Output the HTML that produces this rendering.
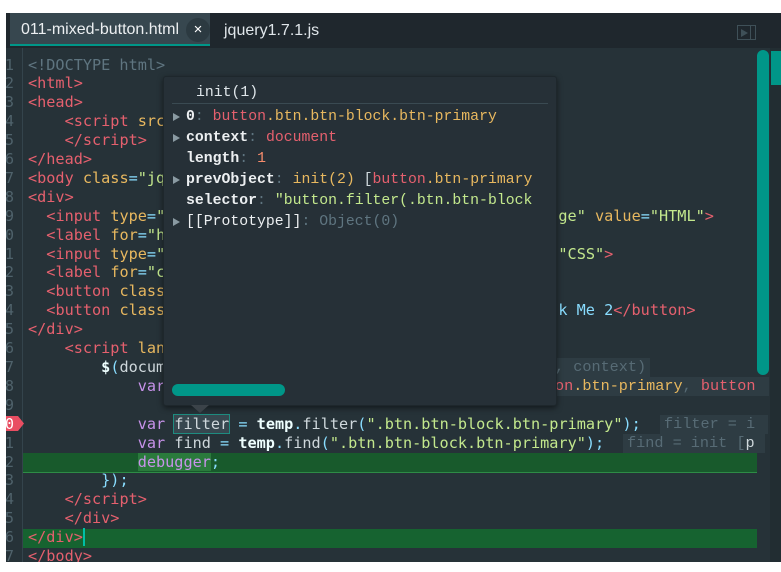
<!DOCTYPE html>
<html><head><style>
body{margin:0;width:781px;height:572px;background:#fff;overflow:hidden;position:relative;font-family:"Liberation Mono",monospace}
#win{position:absolute;left:6px;top:13px;width:775px;height:549px;background:#263238;overflow:hidden}
#tabs{position:absolute;left:0;top:0;width:775px;height:35px;background:#1f272d}
.tab1{position:absolute;left:4px;top:0;width:200px;height:33px;background:#37474f;border-bottom:2px solid #009688;color:#eceff1;font:16px "Liberation Sans",sans-serif;line-height:34px;padding-left:11px;box-sizing:border-box}
.x{position:absolute;left:176px;top:5px;width:24px;height:24px;border-radius:12px;background:#2c3a41;color:#fff;text-align:center;line-height:24px;font-size:15px}
.tab2{position:absolute;left:218px;top:0;color:#e0e6ea;font:16px "Liberation Sans",sans-serif;line-height:36px}
pre{margin:0;position:absolute;left:22px;top:42.5px;font-size:15.2px;line-height:18.9px;color:#cfd8dc;white-space:pre}
#gut{position:absolute;left:-12px;top:42.5px;font-size:15.2px;line-height:18.9px;color:#4f626b;text-align:right;width:20px;white-space:pre;margin:0}
.t{color:#e5606e}.a{color:#e8b85f}.s{color:#c3e88d}.p{color:#89ddff}.v{color:#c792ea}.g{color:#5f7580}.w{color:#eeffff;font-weight:bold}
.ann{position:absolute;background:#2e3c43;color:#576b75;font-size:15.2px;line-height:18.9px;white-space:pre;padding:0 4px}
#pop{position:absolute;left:157px;top:63px;width:392px;height:328px;background:#263037;border:1px solid #1e272c;border-radius:3px;box-shadow:0 2px 6px rgba(0,0,0,.5)}
#pop .r{position:absolute;left:22px;font-size:14.8px;white-space:pre;color:#cfd8dc}
.k{color:#eceff1;font-weight:bold}
.tri{position:absolute;left:9px;width:0;height:0;border-left:7px solid #8a9aa2;border-top:4.5px solid transparent;border-bottom:4.5px solid transparent}
</style></head><body>
<div id="win">
<div id="tabs"><div class="tab1">011-mixed-button.html<div class="x">×</div></div><div class="tab2">jquery1.7.1.js</div>
<div style="position:absolute;left:731px;top:12px;width:19px;height:15px;border:1px solid #3f5058;box-sizing:border-box"><div style="position:absolute;left:3px;top:3px;width:0;height:0;border-left:7px solid #3f5058;border-top:4px solid transparent;border-bottom:4px solid transparent"></div><div style="position:absolute;left:12px;top:0;width:1px;height:13px;background:#3f5058"></div></div>
</div>
<div style="position:absolute;left:16px;top:440px;width:735px;height:19px;background:#185a2c;border-bottom:1px solid #2e8b46"></div>
<div style="position:absolute;left:16px;top:516px;width:735px;height:19px;background:#166330"></div>
<div style="position:absolute;left:16px;top:35px;width:1px;height:520px;background:#34444c"></div>
<div style="position:absolute;left:-6px;top:403px;width:24px;height:15px;background:#e94e62;clip-path:polygon(0 0,75% 0,100% 50%,75% 100%,0 100%)"></div>
<pre id="gut">1
2
3
4
5
6
7
8
9
10
11
12
13
14
15
16
17
18
19
<span style="color:#fff">20</span>
21
22
23
24
25
26
27</pre>
<pre><span class="g">&lt;!DOCTYPE html&gt;</span>
<span class="t">&lt;html&gt;</span>
<span class="t">&lt;head&gt;</span>
    <span class="t">&lt;script</span> <span class="a">src</span>
    <span class="t">&lt;/script&gt;</span>
<span class="t">&lt;/head&gt;</span>
<span class="t">&lt;body</span> <span class="a">class</span><span class="p">=</span><span class="s">"jq</span>
<span class="t">&lt;div&gt;</span>
  <span class="t">&lt;input</span> <span class="a">type</span><span class="p">=</span><span class="s">"</span>                                           <span class="s">ge"</span> <span class="a">value</span><span class="p">=</span><span class="s">"HTML"</span><span class="t">&gt;</span>
  <span class="t">&lt;label</span> <span class="a">for</span><span class="p">=</span><span class="s">"h</span>
  <span class="t">&lt;input</span> <span class="a">type</span><span class="p">=</span><span class="s">"</span>                                           <span class="s">"CSS"</span><span class="t">&gt;</span>
  <span class="t">&lt;label</span> <span class="a">for</span><span class="p">=</span><span class="s">"c</span>
  <span class="t">&lt;button</span> <span class="a">class</span>
  <span class="t">&lt;button</span> <span class="a">class</span>                                           <span class="p">k Me 2</span><span class="t">&lt;/button&gt;</span>
<span class="t">&lt;/div&gt;</span>
    <span class="t">&lt;script</span> <span class="a">lan</span>
        <span class="w">$</span><span class="p">(</span>docum
            <span class="v">var</span>

            <span class="v">var</span> <span style="background:#37474f;outline:1px solid #1e8c80">filter</span> <span class="p">=</span> <span class="w">temp</span><span class="p">.</span>filter<span class="p">(</span><span class="s">".btn.btn-block.btn-primary"</span><span class="p">);</span>
            <span class="v">var</span> find <span class="p">=</span> <span class="w">temp</span><span class="p">.</span>find<span class="p">(</span><span class="s">".btn.btn-block.btn-primary"</span><span class="p">);</span>
            <span class="v" style="background:#2a7a3c">debugger</span><span class="p">;</span>
        <span class="p">});</span>
    <span class="t">&lt;/script&gt;</span>
    <span class="t">&lt;/div&gt;</span>
<span class="t">&lt;/div&gt;</span><span style="border-left:2px solid #00bfa5"></span>
<span class="t">&lt;/body&gt;</span></pre>
<div class="ann" style="left:545px;top:345px">, context)</div>
<div class="ann" style="left:545px;top:364px;width:210px;overflow:hidden"><span class="t">on</span><span class="a">.btn-primary</span>, <span class="t">button</span></div>
<div class="ann" style="left:654px;top:402px;width:100px;overflow:hidden">filter = i</div>
<div class="ann" style="left:617px;top:421px;width:134px;overflow:hidden">find = init [<span style="color:#cfd8dc">p</span></div>
<div id="pop">
<div class="r" style="left:32px;top:8px;color:#dfe6ea">init(1)</div>
<div style="position:absolute;left:8px;right:8px;top:26px;height:1px;background:#3a4a52"></div>
<div class="tri" style="top:36px"></div><div class="r" style="top:32px"><span class="k">0</span><span class="g">:</span> <span class="t">button</span><span class="a">.btn.btn-block.btn-primary</span></div>
<div class="tri" style="top:57px"></div><div class="r" style="top:53px"><span class="k">context</span><span class="g">:</span> <span class="t">document</span></div>
<div class="r" style="top:74px"><span class="k">length</span><span class="g">:</span> <span style="color:#f78c6c">1</span></div>
<div class="tri" style="top:99px"></div><div class="r" style="top:95px"><span class="k">prevObject</span><span class="g">:</span> <span class="a">init(2)</span> [<span class="t">button</span><span class="a">.btn-primary</span></div>
<div class="r" style="top:116px"><span class="k">selector</span><span class="g">:</span> <span class="s">"button.filter(.btn.btn-block</span></div>
<div class="tri" style="top:141px"></div><div class="r" style="top:137px"><span class="k" style="font-weight:normal">[[Prototype]]</span><span class="g">:</span> <span class="g">Object(0)</span></div>
<div style="position:absolute;left:8px;top:307px;width:113px;height:12px;border-radius:6px;background:#009688"></div>
</div>
<div style="position:absolute;left:185px;top:392px;width:0;height:0;border-left:9px solid transparent;border-right:9px solid transparent;border-top:8px solid #3b4349"></div>
<div style="position:absolute;left:751px;top:37px;width:12px;height:325px;border-radius:6px;background:#009688"></div>
<div style="position:absolute;left:764px;top:35px;width:11px;height:514px;background:#222d32"></div>
<div style="position:absolute;left:765px;top:38px;width:10px;height:34px;background:#009688"></div>
</div>
</body></html>
